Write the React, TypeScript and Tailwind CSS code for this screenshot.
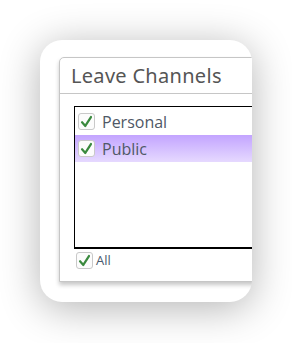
import { useState } from 'react';

const Check = () => (
    <svg width="13" height="13" viewBox="0 0 14 14" className="block">
        <path d="M2.2 7.8 L5.7 11.8 L11.8 2.2" fill="none" stroke="#3a8a3e" strokeWidth="2.4" strokeLinecap="round" strokeLinejoin="round" />
    </svg>
);

const Box = ({ checked }: { checked: boolean }) => (
    <span className="flex items-center justify-center w-[17px] h-[17px] shrink-0 rounded-[3px] border border-[#c9c9c9] bg-[#fcfcfc]">
        {checked && <Check />}
    </span>
);

const channels = [
    { name: 'Personal', selected: false },
    { name: 'Public', selected: true },
];

export default function App() {
    const [checked] = useState([true, true]);

    return (
        <div className="w-[292px] h-[343px] bg-white pl-[40px] pt-[40px]">
            <div className="w-[212px] h-[262px] rounded-[22px] bg-white overflow-hidden pl-[19px] pt-[17px] shadow-[0_6px_40px_rgba(0,0,0,0.3)]">
                <div className="w-[260px] h-[225px] bg-white border border-[#c6c6c6] rounded-tl-[5px] shadow-[0_3px_4px_rgba(0,0,0,0.22)]">
                    <div className="h-[36px] border-b border-[#c6c6c6] pl-[11px] flex items-center">
                        <h2 className="text-[20px] text-[#555] font-['Noto_Sans',sans-serif] tracking-[0.3px]">Leave Channels</h2>
                    </div>
                    <div className="pl-[14px] pt-[12px] font-['Open_Sans',sans-serif]">
                        <div className="h-[143px] border border-black border-b-2 pt-[1px]">
                            {channels.map((c, i) => (
                                <div
                                    key={c.name}
                                    className={`h-[27px] flex items-center gap-[7px] pl-[3px] ${c.selected ? 'bg-gradient-to-b from-[#c3a4ff] to-[#e6d9ff]' : ''}`}
                                >
                                    <Box checked={checked[i]} />
                                    <span className="text-[16px] text-[#4f5866]">{c.name}</span>
                                </div>
                            ))}
                        </div>
                        <div className="flex items-center gap-[3px] pt-[2px] pl-[2px]">
                            <Box checked />
                            <span className="text-[13px] text-[#4a5a6e]">All</span>
                        </div>
                    </div>
                </div>
            </div>
        </div>
    );
}
